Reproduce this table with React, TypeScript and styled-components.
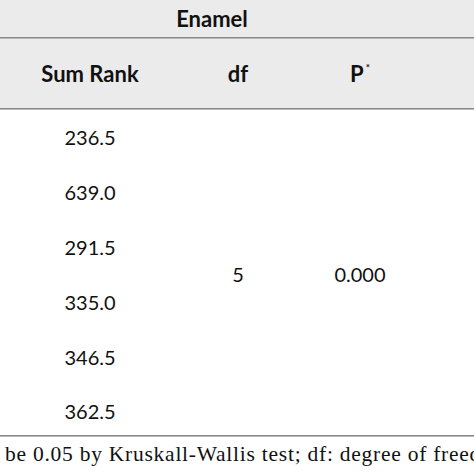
import React from "react";
import styled, { createGlobalStyle } from "styled-components";

const Global = createGlobalStyle`
  html, body { margin: 0; padding: 0; background: #fff; }
  body { width: 474px; height: 474px; overflow: hidden; }
`;

const Page = styled.div`
  width: 474px;
  height: 474px;
  overflow: hidden;
  display: flex;
  flex-direction: column;
  font-family: Lato, "Open Sans", sans-serif;
  color: #111;
`;

const HeaderBand = styled.div`
  background: #ebebeb;
  display: flex;
  flex-direction: column;
`;

const Cols = styled.div<{ $h: number }>`
  display: grid;
  grid-template-columns: 180px 116px 128px 1fr;
  height: ${(p) => p.$h}px;
  align-items: center;
`;

const GroupTitle = styled.div`
  grid-column: 1 / 4;
  text-align: center;
  font-weight: 700;
  font-size: 22px;
`;

const HeadCell = styled.div`
  text-align: center;
  font-weight: 700;
  font-size: 22px;
  sup { font-size: 10px; position: relative; top: -3px; margin-left: 2px; }
`;

const Rule = styled.div`
  flex-shrink: 0;
  height: 2px;
  background: #8a8a8a;
  border-bottom: 1px solid #b8b8b8;
  box-sizing: border-box;
`;

const Body = styled.div`
  flex-shrink: 0;
  display: grid;
  grid-template-columns: 180px 116px 128px 1fr;
  grid-template-rows: repeat(6, 54.8px);
  align-content: start;
  height: 325px;
`;

const Cell = styled.div<{ $col: number; $row?: number; $span?: boolean }>`
  grid-column: ${(p) => p.$col};
  grid-row: ${(p) => (p.$span ? "1 / 7" : p.$row)};
  display: flex;
  align-items: center;
  justify-content: center;
  font-size: 20px;
`;

const Footnote = styled.div`
  font-family: "Liberation Serif", serif;
  font-size: 21.5px;
  letter-spacing: 0.75px;
  white-space: nowrap;
  padding-left: 5px;
  padding-top: 5px;
  color: #111;
`;

const ranks = ["236.5", "639.0", "291.5", "335.0", "346.5", "362.5"];

export default function App() {
  return (
    <Page>
      <Global />
      <HeaderBand>
        <Cols $h={37}>
          <GroupTitle>Enamel</GroupTitle>
        </Cols>
        <Rule />
        <Cols $h={69}>
          <HeadCell>Sum Rank</HeadCell>
          <HeadCell>df</HeadCell>
          <HeadCell>
            P<sup>*</sup>
          </HeadCell>
        </Cols>
        <Rule />
      </HeaderBand>
      <Body>
        {ranks.map((r, i) => (
          <Cell key={r} $col={1} $row={i + 1}>
            {r}
          </Cell>
        ))}
        <Cell $col={2} $span>
          5
        </Cell>
        <Cell $col={3} $span>
          0.000
        </Cell>
      </Body>
      <Rule />
      <Footnote>be 0.05 by Kruskall-Wallis test; df: degree of freedom</Footnote>
    </Page>
  );
}
